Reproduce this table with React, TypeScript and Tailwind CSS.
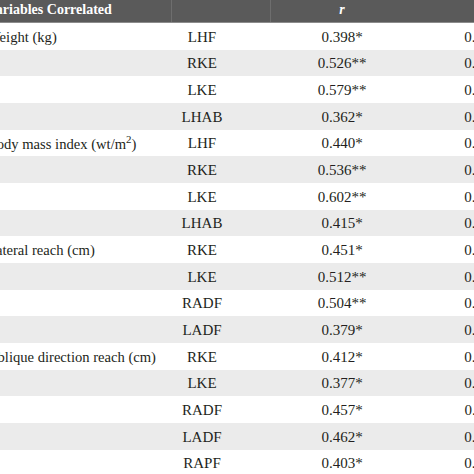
const rows: { label: string; seg: string; r: string; p: string }[] = [
  { label: "Weight (kg)", seg: "LHF", r: "0.398*", p: "0.032" },
  { label: "", seg: "RKE", r: "0.526**", p: "0.003" },
  { label: "", seg: "LKE", r: "0.579**", p: "0.001" },
  { label: "", seg: "LHAB", r: "0.362*", p: "0.049" },
  { label: "BMI", seg: "LHF", r: "0.440*", p: "0.015" },
  { label: "", seg: "RKE", r: "0.536**", p: "0.002" },
  { label: "", seg: "LKE", r: "0.602**", p: "0.000" },
  { label: "", seg: "LHAB", r: "0.415*", p: "0.023" },
  { label: "Lateral reach (cm)", seg: "RKE", r: "0.451*", p: "0.012" },
  { label: "", seg: "LKE", r: "0.512**", p: "0.004" },
  { label: "", seg: "RADF", r: "0.504**", p: "0.005" },
  { label: "", seg: "LADF", r: "0.379*", p: "0.039" },
  { label: "Oblique direction reach (cm)", seg: "RKE", r: "0.412*", p: "0.024" },
  { label: "", seg: "LKE", r: "0.377*", p: "0.040" },
  { label: "", seg: "RADF", r: "0.457*", p: "0.011" },
  { label: "", seg: "LADF", r: "0.462*", p: "0.010" },
  { label: "", seg: "RAPF", r: "0.403*", p: "0.027" },
];

function Label({ text }: { text: string }) {
  // BMI row carries a superscript unit
  if (text === "BMI") {
    return (
      <span>
        Body mass index (wt/m<sup>2</sup>)
      </span>
    );
  }
  return <span>{text}</span>;
}

export default function App() {
  return (
    <div className="w-[474px] h-[474px] overflow-hidden bg-white font-['Liberation_Serif',serif] text-[15px] text-[#231f20]">
      <div className="ml-[-13px] w-[560px]">
        {/* Header */}
        <div className="flex h-[23px] bg-[#5a5a5a] text-white text-[14px] font-bold border-b border-[#8c8c8c]">
          <div className="w-[185px] flex items-center pb-[4px] border-r border-[#6e6e6e]">
            Variables Correlated
          </div>
          <div className="w-[99px] border-r border-[#6e6e6e]" />
          <div className="w-[142px] flex items-center justify-center pb-[4px] italic">r</div>
          <div className="flex-1 flex items-center pl-[62px] pb-[4px] italic">p</div>
        </div>

        {/* Body */}
        {rows.map((row, i) => (
          <div
            key={i}
            className={`grid grid-cols-[185px_60px_220px_58px] h-[26.67px] items-center leading-none pt-[2px] ${
              i % 2 === 0 ? "bg-white" : "bg-[#ebebeb]"
            }`}
          >
            <div className="whitespace-nowrap text-[14.6px]">
              <Label text={row.label} />
            </div>
            <div className="text-center">{row.seg}</div>
            <div className="text-center">{row.r}</div>
            <div className="text-center whitespace-nowrap">{row.p}</div>
          </div>
        ))}
      </div>
    </div>
  );
}
